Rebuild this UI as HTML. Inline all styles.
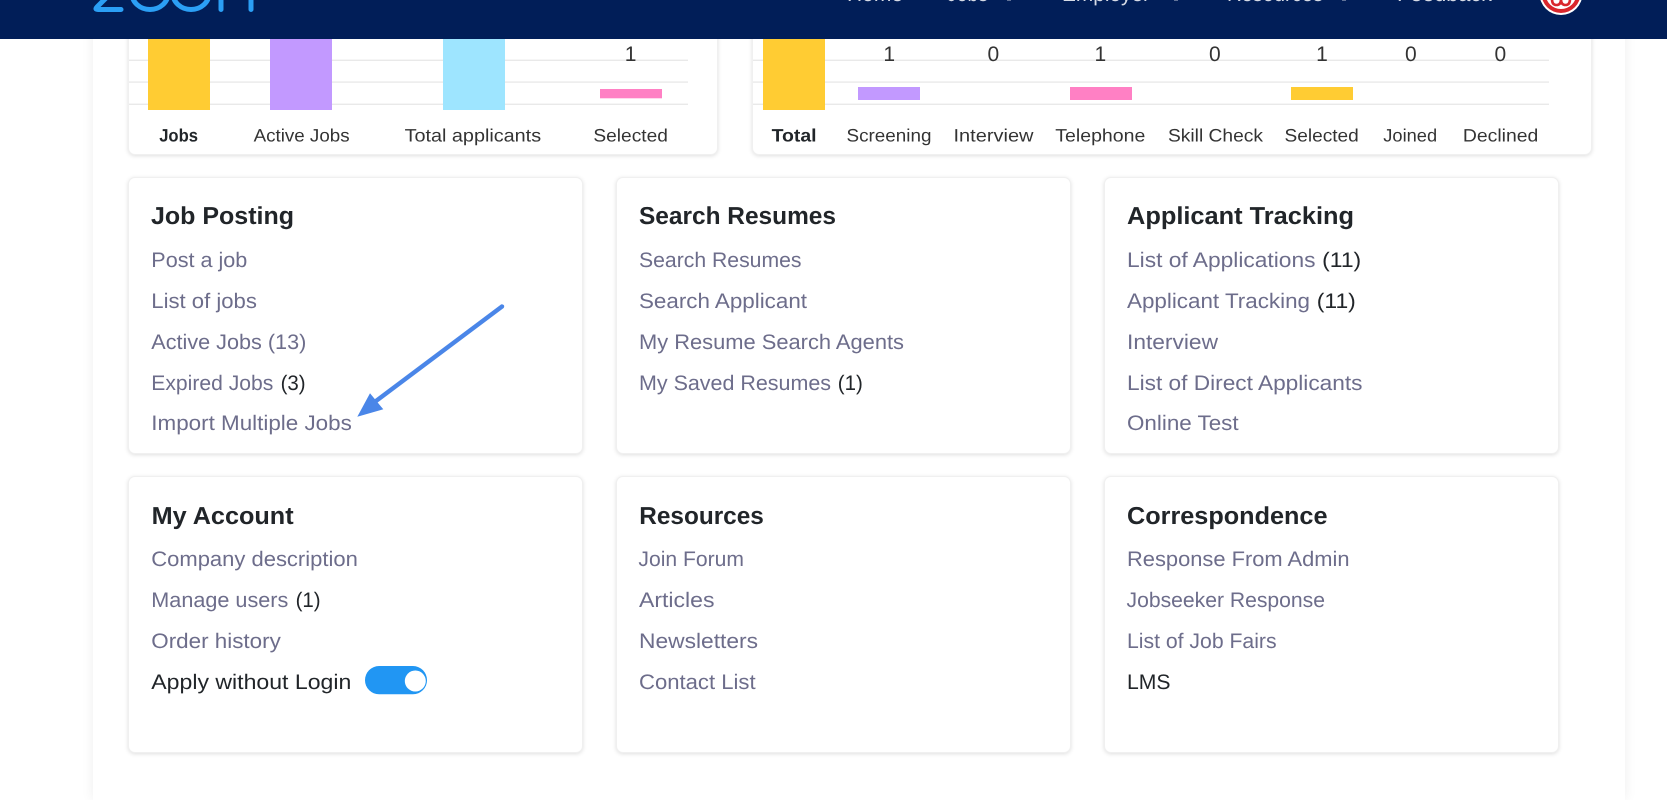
<!DOCTYPE html>
<html lang="en">
<head>
<meta charset="utf-8">
<title>Employer Dashboard</title>
<style>
html,body{margin:0;padding:0;width:1667px;height:770px;overflow:hidden;background:#fff}
.panel{position:absolute;left:93px;top:0;width:1532px;height:800px;background:#fff;box-shadow:0 0 12px rgba(0,0,0,.07)}
.card{position:absolute;box-sizing:border-box;background:#fff;border:1px solid #f0f0f0;border-radius:7px;box-shadow:0 1px 4px rgba(0,0,0,.13)}
.hdr{position:absolute;left:0;top:0;width:1667px;height:39.4px;background:#011e58}
svg.top{position:absolute;left:0;top:0;filter:blur(.3px)}
text{font-family:"Liberation Sans",sans-serif;text-rendering:geometricPrecision;transform:translateY(-.4px)}
.h{font-size:24.5px;font-weight:700;fill:#212529}
.l{font-size:21px;fill:#6d6d8b}
.d{font-size:21px;fill:#212529}
.c{font-size:18px;fill:#333}
.b{font-size:18px;font-weight:700;fill:#212529}
.n{font-size:21px;fill:#333;text-anchor:middle}
.nav{font-size:21px;fill:#d6dbe6}
</style>
</head>
<body>
<div class="panel"></div>
<div class="card" style="left:128.3px;top:-20px;width:590px;height:175px"></div>
<div class="card" style="left:752.300px;top:-20px;width:839.500px;height:175px"></div>
<div class="card" style="left:128.3px;top:177px;width:454.5px;height:277.3px"></div>
<div class="card" style="left:615.8px;top:177px;width:455px;height:277.3px"></div>
<div class="card" style="left:1103.8px;top:177px;width:455px;height:277.3px"></div>
<div class="card" style="left:128.3px;top:476px;width:454.5px;height:277.3px"></div>
<div class="card" style="left:615.8px;top:476px;width:455px;height:277.3px"></div>
<div class="card" style="left:1103.8px;top:476px;width:455px;height:277.3px"></div>

<svg class="top" width="1667" height="770" viewBox="0 0 1667 770">
  <!-- chart grid -->
  <g fill="#e9e9e9">
    <rect x="129" y="59.6" width="559" height="1.4"/>
    <rect x="129" y="81.4" width="559" height="1.4"/>
    <rect x="129" y="103.6" width="559" height="1.4"/>
    <rect x="753" y="59.6" width="796" height="1.4"/>
    <rect x="753" y="81.4" width="796" height="1.4"/>
    <rect x="753" y="103.6" width="796" height="1.4"/>
  </g>
  <!-- bars -->
  <rect x="148" y="30" width="62" height="80" fill="#ffcc33"/>
  <rect x="270" y="30" width="62" height="80" fill="#c299ff"/>
  <rect x="443" y="30" width="62" height="80" fill="#9ee5ff"/>
  <rect x="600" y="89" width="62" height="9.3" fill="#ff80c4"/>
  <rect x="763" y="30" width="62" height="80" fill="#ffcc33"/>
  <rect x="858" y="87" width="62" height="13" fill="#c299ff"/>
  <rect x="1070" y="87" width="62" height="13" fill="#ff80c4"/>
  <rect x="1291" y="87" width="62" height="13" fill="#ffcc33"/>
  <!-- values -->
  <text class="n" x="630.6" y="61.3">1</text>
  <text class="n" x="889.2" y="61.3">1</text>
  <text class="n" x="993.3" y="61.3">0</text>
  <text class="n" x="1100.3" y="61.3">1</text>
  <text class="n" x="1214.9" y="61.3">0</text>
  <text class="n" x="1322" y="61.3">1</text>
  <text class="n" x="1410.8" y="61.3">0</text>
  <text class="n" x="1500.3" y="61.3">0</text>
  <!-- chart labels -->
  <text class="b" x="159.2" y="141.7" textLength="38.8" lengthAdjust="spacingAndGlyphs">Jobs</text>
  <text class="c" x="253.6" y="141.7" textLength="96" lengthAdjust="spacingAndGlyphs">Active Jobs</text>
  <text class="c" x="404.6" y="141.7" textLength="136.5" lengthAdjust="spacingAndGlyphs">Total applicants</text>
  <text class="c" x="593.4" y="141.7" textLength="74.5" lengthAdjust="spacingAndGlyphs">Selected</text>
  <text class="b" x="771.6" y="141.7" textLength="45" lengthAdjust="spacingAndGlyphs">Total</text>
  <text class="c" x="846.5" y="141.7" textLength="85" lengthAdjust="spacingAndGlyphs">Screening</text>
  <text class="c" x="953.5" y="141.7" textLength="80" lengthAdjust="spacingAndGlyphs">Interview</text>
  <text class="c" x="1055.3" y="141.7" textLength="90" lengthAdjust="spacingAndGlyphs">Telephone</text>
  <text class="c" x="1168" y="141.7" textLength="95" lengthAdjust="spacingAndGlyphs">Skill Check</text>
  <text class="c" x="1284.5" y="141.7" textLength="74.3" lengthAdjust="spacingAndGlyphs">Selected</text>
  <text class="c" x="1383.3" y="141.7" textLength="53.8" lengthAdjust="spacingAndGlyphs">Joined</text>
  <text class="c" x="1462.9" y="141.7" textLength="75.4" lengthAdjust="spacingAndGlyphs">Declined</text>

  <!-- Job Posting -->
  <text class="h" x="151" y="224.3" textLength="143" lengthAdjust="spacingAndGlyphs">Job Posting</text>
  <text class="l" x="151.3" y="267.3" textLength="96" lengthAdjust="spacingAndGlyphs">Post a job</text>
  <text class="l" x="151.3" y="308.3" textLength="105.6" lengthAdjust="spacingAndGlyphs">List of jobs</text>
  <text class="l" x="151.3" y="349.3" textLength="155" lengthAdjust="spacingAndGlyphs">Active Jobs (13)</text>
  <text class="l" x="151.3" y="390.3" textLength="122" lengthAdjust="spacingAndGlyphs">Expired Jobs</text>
  <text class="d" x="280.6" y="390.3" textLength="25" lengthAdjust="spacingAndGlyphs">(3)</text>
  <text class="l" x="151.3" y="430.3" textLength="200.5" lengthAdjust="spacingAndGlyphs">Import Multiple Jobs</text>

  <!-- Search Resumes -->
  <text class="h" x="639" y="224.3" textLength="197" lengthAdjust="spacingAndGlyphs">Search Resumes</text>
  <text class="l" x="639" y="267.3" textLength="162.5" lengthAdjust="spacingAndGlyphs">Search Resumes</text>
  <text class="l" x="639" y="308.3" textLength="168" lengthAdjust="spacingAndGlyphs">Search Applicant</text>
  <text class="l" x="639" y="349.3" textLength="265" lengthAdjust="spacingAndGlyphs">My Resume Search Agents</text>
  <text class="l" x="639" y="390.3" textLength="192" lengthAdjust="spacingAndGlyphs">My Saved Resumes</text>
  <text class="d" x="837.8" y="390.3" textLength="25" lengthAdjust="spacingAndGlyphs">(1)</text>

  <!-- Applicant Tracking -->
  <text class="h" x="1127" y="224.3" textLength="227" lengthAdjust="spacingAndGlyphs">Applicant Tracking</text>
  <text class="l" x="1127" y="267.3" textLength="188.500" lengthAdjust="spacingAndGlyphs">List of Applications</text>
  <text class="d" x="1322.2" y="267.3" textLength="39" lengthAdjust="spacingAndGlyphs">(11)</text>
  <text class="l" x="1127" y="308.3" textLength="183" lengthAdjust="spacingAndGlyphs">Applicant Tracking</text>
  <text class="d" x="1316.8" y="308.3" textLength="39" lengthAdjust="spacingAndGlyphs">(11)</text>
  <text class="l" x="1127" y="349.3" textLength="91" lengthAdjust="spacingAndGlyphs">Interview</text>
  <text class="l" x="1127" y="390.3" textLength="235.5" lengthAdjust="spacingAndGlyphs">List of Direct Applicants</text>
  <text class="l" x="1127" y="430.3" textLength="111.6" lengthAdjust="spacingAndGlyphs">Online Test</text>

  <!-- My Account -->
  <text class="h" x="151.6" y="524.3" textLength="142" lengthAdjust="spacingAndGlyphs">My Account</text>
  <text class="l" x="151.3" y="566.3" textLength="206.5" lengthAdjust="spacingAndGlyphs">Company description</text>
  <text class="l" x="151.3" y="607.3" textLength="137" lengthAdjust="spacingAndGlyphs">Manage users</text>
  <text class="d" x="295.6" y="607.3" textLength="25" lengthAdjust="spacingAndGlyphs">(1)</text>
  <text class="l" x="151.3" y="648.3" textLength="129.5" lengthAdjust="spacingAndGlyphs">Order history</text>
  <text class="d" x="151.3" y="689.3" textLength="200" lengthAdjust="spacingAndGlyphs">Apply without Login</text>
  <rect x="365" y="666" width="62" height="28.3" rx="14.1" fill="#2196f3"/>
  <circle cx="415.3" cy="681" r="10.5" fill="#fff"/>

  <!-- Resources -->
  <text class="h" x="639.3" y="524.3" textLength="124.5" lengthAdjust="spacingAndGlyphs">Resources</text>
  <text class="l" x="638.4" y="566.3" textLength="105.6" lengthAdjust="spacingAndGlyphs">Join Forum</text>
  <text class="l" x="639" y="607.3" textLength="75.5" lengthAdjust="spacingAndGlyphs">Articles</text>
  <text class="l" x="639" y="648.3" textLength="119" lengthAdjust="spacingAndGlyphs">Newsletters</text>
  <text class="l" x="639" y="689.3" textLength="116.6" lengthAdjust="spacingAndGlyphs">Contact List</text>

  <!-- Correspondence -->
  <text class="h" x="1127" y="524.3" textLength="200.5" lengthAdjust="spacingAndGlyphs">Correspondence</text>
  <text class="l" x="1127" y="566.3" textLength="222.5" lengthAdjust="spacingAndGlyphs">Response From Admin</text>
  <text class="l" x="1126.5" y="607.3" textLength="198.5" lengthAdjust="spacingAndGlyphs">Jobseeker Response</text>
  <text class="l" x="1127" y="648.3" textLength="149.6" lengthAdjust="spacingAndGlyphs">List of Job Fairs</text>
  <text class="d" x="1127" y="689.3" textLength="43.5" lengthAdjust="spacingAndGlyphs">LMS</text>

  <!-- annotation arrow -->
  <path d="M502 306.5L376 401" stroke="#4a86e8" stroke-width="4.4" stroke-linecap="round" fill="none"/>
  <path d="M357.3 416.7L370 393.3L383.3 409.3Z" fill="#4a86e8"/>
</svg>

<div class="hdr"></div>
<svg class="top" width="1667" height="45" viewBox="0 0 1667 45">
  <!-- logo -->
  <g fill="none" stroke="#2b9ff5" stroke-width="5" stroke-linecap="round">
    <path d="M106 -2L97 7Q94.500 9.500 98 9.500H121"/>
    <ellipse cx="150" cy="-6.500" rx="18" ry="16"/>
    <ellipse cx="191" cy="-6.500" rx="18" ry="16"/>
    <path d="M221 -5V9.500M251 -5V9.500"/>
  </g>
  <!-- nav -->
  <text class="nav" x="847" y="1.500" textLength="56" lengthAdjust="spacingAndGlyphs">Home</text>
  <text class="nav" x="947" y="1.500" textLength="41" lengthAdjust="spacingAndGlyphs">Jobs</text>
  <text class="nav" x="1062" y="1.500" textLength="88" lengthAdjust="spacingAndGlyphs">Employer</text>
  <text class="nav" x="1227" y="1.500" textLength="96" lengthAdjust="spacingAndGlyphs">Resources</text>
  <text class="nav" x="1397" y="1.500" textLength="95" lengthAdjust="spacingAndGlyphs">Feedback</text>
  <g fill="#d6dbe6" opacity=".45">
    <rect x="1007" y="0" width="4" height="1"/>
    <rect x="1174" y="0" width="4" height="1"/>
    <rect x="1342" y="0" width="4" height="1"/>
  </g>
  <!-- avatar -->
  <circle cx="1561" cy="-6.500" r="21.500" fill="#fff"/>
  <circle cx="1561" cy="-6.500" r="19.500" fill="#d9262c"/>
  <circle cx="1561" cy="-6.500" r="15.500" fill="#fff"/>
  <path d="M1552 -1q0 6 4.500 6t4.500 -6q0 6 4.500 6t4.500 -6" fill="none" stroke="#d9262c" stroke-width="2.600"/>
</svg>
</body>
</html>
